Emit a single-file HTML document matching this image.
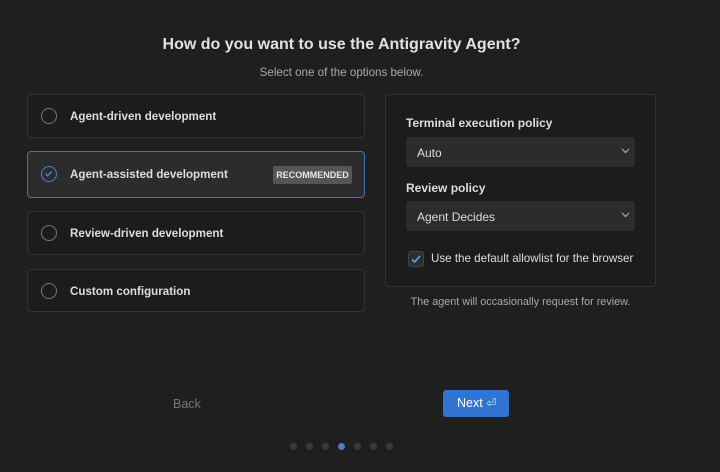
<!DOCTYPE html>
<html><head><style>
*{box-sizing:border-box;margin:0;padding:0}
body{width:720px;height:472px;background:#1f1f1f;font-family:"Liberation Sans",sans-serif;color:#ddd;position:relative;overflow:hidden}
.a{position:absolute}
h1{position:absolute;top:36px;left:0;width:683px;text-align:center;font-size:16px;font-weight:bold;color:#e2e2e2}
.sub{top:66px;left:0;width:683px;text-align:center;font-size:11.6px;color:#aaa}
.opt{position:absolute;left:27px;width:338px;border:1px solid #333;border-radius:4px;background:#1c1c1c}
.opt .r{position:absolute;left:13px;width:16px;height:16px;border:1.5px solid #777;border-radius:50%}
.opt .t{position:absolute;left:42px;font-size:11.6px;font-weight:bold;color:#ddd}
.sel{background:#2c2c2c;border-color:#3f72b8}
.panel{left:385px;top:94px;width:271px;height:193px;border:1px solid #333;border-radius:4px;background:#1c1c1c}
.lbl{font-size:12px;font-weight:bold;color:#ddd}
.dd{width:229px;height:30px;background:#2c2c2c;border-radius:3px;font-size:12px;color:#ddd;padding:9px 11px;left:20px}
.dd svg{position:absolute;right:5px;top:11px}
.dot{top:443px;width:7px;height:7px;border-radius:50%;background:#3a3a3a}
</style></head><body>
<h1>How do you want to use the Antigravity Agent?</h1>
<div class="a sub">Select one of the options below.</div>

<div class="opt" style="top:94px;height:44px"><div class="r" style="top:13px"></div><div class="t" style="top:15px">Agent-driven development</div></div>
<div class="opt sel" style="top:151px;height:47px"><div class="r" style="top:14px;border-color:#4a84d0"><svg width="13" height="13" viewBox="0 0 13 13" style="position:absolute;left:0;top:0"><path d="M3.5 6.8l2 2 4-4.2" stroke="#4a84d0" stroke-width="1.4" fill="none"/></svg></div><div class="t" style="top:16px">Agent-assisted development</div>
<div class="a" style="left:245px;top:14px;width:79px;height:18px;background:#555;border-radius:2px;font-size:9px;font-weight:bold;color:#e8e8e8;text-align:center;line-height:18px">RECOMMENDED</div></div>
<div class="opt" style="top:211px;height:44px"><div class="r" style="top:13px"></div><div class="t" style="top:15px">Review-driven development</div></div>
<div class="opt" style="top:269px;height:43px"><div class="r" style="top:13px"></div><div class="t" style="top:15px">Custom configuration</div></div>

<div class="a panel">
<div class="a lbl" style="left:20px;top:21px">Terminal execution policy</div>
<div class="a dd" style="top:42px">Auto<svg width="9" height="6"><path d="M1 1l3.5 3.5L8 1" stroke="#aaa" stroke-width="1.2" fill="none"/></svg></div>
<div class="a lbl" style="left:20px;top:86px">Review policy</div>
<div class="a dd" style="top:106px">Agent Decides<svg width="9" height="6"><path d="M1 1l3.5 3.5L8 1" stroke="#aaa" stroke-width="1.2" fill="none"/></svg></div>
<div class="a" style="left:22px;top:156px;width:16px;height:16px;border-radius:3px;background:#2e2e2e;border:1px solid #444"><svg width="14" height="14" viewBox="0 0 14 14"><path d="M3 7.5l2.5 2.5 5.5-6" stroke="#5a9be8" stroke-width="1.8" fill="none"/></svg></div>
<div class="a" style="left:45px;top:157px;font-size:11.6px;color:#ddd">Use the default allowlist for the browser</div>
</div>
<div class="a" style="left:385px;top:296px;width:271px;text-align:center;font-size:10.8px;color:#aaa">The agent will occasionally request for review.</div>

<div class="a" style="left:173px;top:397px;font-size:12.5px;color:#777">Back</div>
<div class="a" style="left:443px;top:390px;width:66px;height:27px;background:#2f74d0;border-radius:3px;color:#fff;font-size:12.5px;line-height:27px;padding-left:14px">Next <span style="color:#cfe0f5;font-size:12px">⏎</span></div>

<div class="a dot" style="left:290px"></div>
<div class="a dot" style="left:306px"></div>
<div class="a dot" style="left:322px"></div>
<div class="a dot" style="left:338px;background:#4f7fc0"></div>
<div class="a dot" style="left:354px"></div>
<div class="a dot" style="left:370px"></div>
<div class="a dot" style="left:386px"></div>
</body></html>
